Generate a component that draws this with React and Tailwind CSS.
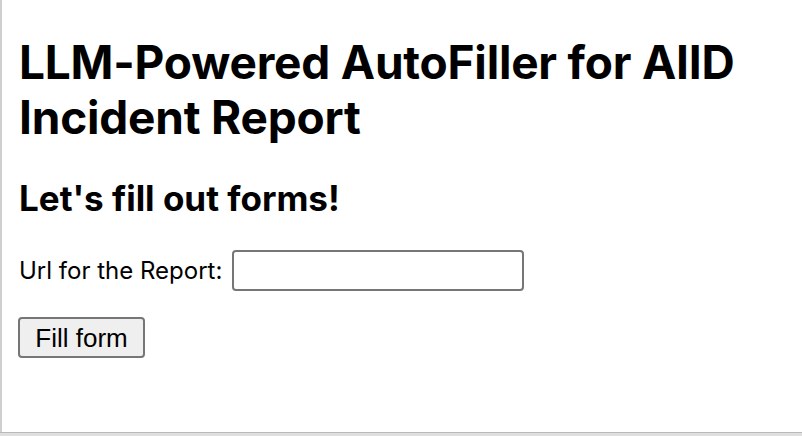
import { useState } from "react";

export default function App() {
  const [url, setUrl] = useState("");

  return (
    <div className="flex h-[436px] w-[802px] flex-col overflow-hidden bg-white">
      <div className="flex min-h-0 flex-1">
        {/* edge of the window behind */}
        <div className="w-[2px] shrink-0 bg-[#cfcfcf]" />
        <main className="flex-1 pl-[17px] pt-[35px] font-['Inter',sans-serif] text-black">
          <h1 className="text-[46px] font-bold leading-[55px] tracking-[-0.2px]">
            LLM-Powered AutoFiller for AIID
            <br />
            Incident Report
          </h1>
          <h2 className="mt-[32px] text-[35px] font-bold leading-[42px]">Let's fill out forms!</h2>
          <form
            className="mt-[31px]"
            onSubmit={(e) => e.preventDefault()}
          >
            <label className="flex items-center gap-[10px] text-[24px]">
              Url for the Report:
              <input
                type="text"
                value={url}
                onChange={(e) => setUrl(e.target.value)}
                className="h-[41px] w-[292px] rounded-[4px] border-2 border-[#767676] bg-white px-1 outline-none"
              />
            </label>
            <button
              type="submit"
              className="-ml-px mt-[26px] h-[41px] w-[127px] rounded-[4px] border-2 border-[#767676] bg-[#efefef] font-['Liberation_Sans',sans-serif] text-[26px] leading-none"
            >
              Fill form
            </button>
          </form>
        </main>
      </div>
      <div className="h-[4px] shrink-0 border-t border-[#b9b9b9] bg-[#dedede]" />
    </div>
  );
}
